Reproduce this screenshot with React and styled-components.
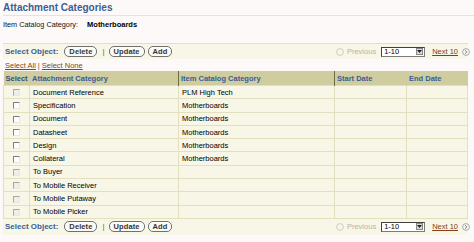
import React from "react";
import styled, { createGlobalStyle } from "styled-components";

const GlobalStyle = createGlobalStyle`
  html, body {
    margin: 0;
    padding: 0;
    background: #fcf9f8;
  }
  body {
    font-family: "Liberation Sans", Arial, sans-serif;
    font-size: 8px;
    color: #000;
  }
`;

const rows = [
  ["Document Reference", "PLM High Tech", true],
  ["Specification", "Motherboards"],
  ["Document", "Motherboards"],
  ["Datasheet", "Motherboards"],
  ["Design", "Motherboards"],
  ["Collateral", "Motherboards"],
  ["To Buyer", "", true],
  ["To Mobile Receiver", "", true],
  ["To Mobile Putaway", "", true],
  ["To Mobile Picker", "", true],
];

function Toolbar({ bottom }) {
  return (
    <Bar $bottom={bottom}>
      <Label>Select Object:</Label>
      <PillButton>Delete</PillButton>
      <Sep>|</Sep>
      <PillButton>Update</PillButton>
      <PillButton>Add</PillButton>
      <Pager>
        <Circle>
          <svg width="8" height="8" viewBox="0 0 8 8">
            <circle cx="4" cy="4" r="3.4" fill="none" stroke="#c8c8c0" strokeWidth="0.9" />
          </svg>
        </Circle>
        <Prev>Previous</Prev>
        <Select>
          <span>1-10</span>
          <Drop>
            <svg width="5" height="4" viewBox="0 0 5 4">
              <path d="M0 0 L5 0 L2.5 3 Z" fill="#222" />
            </svg>
          </Drop>
        </Select>
        <NextLink>Next 10</NextLink>
        <Circle>
          <svg width="8" height="8" viewBox="0 0 8 8">
            <circle cx="4" cy="4" r="3.4" fill="none" stroke="#9aa0b0" strokeWidth="0.9" />
            <path d="M3 2.3 L5 4 L3 5.7" fill="none" stroke="#7a8096" strokeWidth="0.9" />
          </svg>
        </Circle>
      </Pager>
    </Bar>
  );
}

export default function App() {
  return (
    <Root>
      <GlobalStyle />
      <Title>Attachment Categories</Title>
      <SubLine>
        <SubLabel>Item Catalog Category:</SubLabel>
        <SubValue>Motherboards</SubValue>
      </SubLine>
      <Toolbar />
      <SelectLinks>
        <A>Select All</A>
        <Pipe>|</Pipe>
        <A>Select None</A>
      </SelectLinks>
      <Table>
        <colgroup>
          <col style={{ width: 26 }} />
          <col style={{ width: 149 }} />
          <col style={{ width: 156 }} />
          <col style={{ width: 72 }} />
          <col />
        </colgroup>
        <thead>
          <tr>
            <Th $first>Select</Th>
            <Th $line>Attachment Category</Th>
            <Th $line>Item Catalog Category</Th>
            <Th>Start Date</Th>
            <Th>End Date</Th>
          </tr>
        </thead>
        <tbody>
          {rows.map(([name, cat, dim]) => (
            <tr key={name}>
              <Td $center>
                <Check $dim={dim} />
              </Td>
              <Td>{name}</Td>
              <Td>{cat}</Td>
              <Td />
              <Td />
            </tr>
          ))}
        </tbody>
      </Table>
      <Toolbar bottom />
    </Root>
  );
}

const Root = styled.div`
  width: 474px;
  height: 242px;
  padding: 1px 6px 0 3px;
  box-sizing: border-box;
  display: flex;
  flex-direction: column;
`;

const Title = styled.div`
  font-size: 10px;
  font-weight: bold;
  color: #3a5e94;
  height: 14px;
  line-height: 14px;
  border-bottom: 1px solid #ebe2cf;
  margin-right: -6px;
`;

const SubLine = styled.div`
  display: flex;
  gap: 9px;
  height: 12px;
  align-items: center;
  margin-top: 2px;
  color: #000;
`;

const SubLabel = styled.span`
  font-size: 7.3px;
  color: #111;
`;

const SubValue = styled.span`
  font-size: 7.5px;
  font-weight: bold;
  color: #000;
`;

const Bar = styled.div`
  display: flex;
  align-items: center;
  height: ${(p) => (p.$bottom ? "16px" : "15px")};
  background: #f8f6e6;
  border-top: ${(p) => (p.$bottom ? "none" : "1px solid #e4dfc2")};
  padding-left: 2px;
  margin-top: ${(p) => (p.$bottom ? "0" : "13px")};
`;

const Label = styled.span`
  color: #3a5e94;
  font-weight: bold;
  font-size: 8px;
  margin-right: 6px;
`;

const PillButton = styled.span`
  display: inline-flex;
  align-items: center;
  height: 9px;
  padding: 0 4px;
  border: 1px solid #707070;
  border-radius: 5px;
  background: #fbfbf8;
  color: #333;
  font-size: 7.5px;
  font-weight: bold;
  letter-spacing: 0.1px;
  margin-right: 3px;
`;

const Sep = styled.span`
  color: #666;
  margin: 0 4px 0 2px;
  font-size: 8px;
`;

const Pager = styled.div`
  margin-left: auto;
  display: flex;
  align-items: center;
  gap: 3px;
  margin-right: -2px;
`;

const Circle = styled.span`
  display: inline-flex;
`;

const Prev = styled.span`
  color: #b4b4ae;
  font-size: 7.5px;
`;

const Select = styled.span`
  display: inline-flex;
  align-items: center;
  justify-content: space-between;
  width: 44px;
  height: 10px;
  background: #fff;
  border: 1px solid #7c7c7c;
  border-top-color: #404040;
  border-left-color: #404040;
  font-size: 7.5px;
  padding-left: 2px;
  margin-left: 2px;
  box-sizing: border-box;
  margin-right: 4px;
`;

const Drop = styled.span`
  display: inline-flex;
  align-items: center;
  justify-content: center;
  width: 7px;
  height: 7px;
  background: #d8d8d8;
  border: 1px solid #888;
  margin-right: 1px;
  box-sizing: border-box;
`;

const NextLink = styled.span`
  color: #80401a;
  text-decoration: underline;
  font-size: 7.5px;
  margin-right: 1px;
`;

const SelectLinks = styled.div`
  display: flex;
  align-items: center;
  height: 12px;
  font-size: 7.5px;
  padding-left: 2px;
`;

const A = styled.span`
  color: #7a4a1e;
  text-decoration: underline;
`;

const Pipe = styled.span`
  color: #7a4a1e;
  margin: 0 2px;
`;

const Table = styled.table`
  border-collapse: collapse;
  width: 465px;
  table-layout: fixed;
  background: #f7f6e7;
`;

const Th = styled.th`
  background: #cfcc9f;
  color: ${(p) => (p.$first ? "#2f4f80" : "#3a5e94")};
  font-weight: bold;
  font-size: 7.5px;
  text-align: left;
  height: 14px;
  padding: 0 2px;
  white-space: nowrap;
  overflow: hidden;
  border-right: 1px solid ${(p) => (p.$line ? "#6e6c40" : "#cfcc9f")};
`;

const Td = styled.td`
  height: 12.3px;
  padding: 0 3px;
  font-size: 7.5px;
  border: 1px solid #e4dfbf;
  text-align: ${(p) => (p.$center ? "center" : "left")};
  white-space: nowrap;
`;

const Check = styled.span`
  display: inline-block;
  width: 7px;
  height: 7px;
  box-sizing: border-box;
  border: 1px solid ${(p) => (p.$dim ? "#a8a8a0" : "#808080")};
  border-right-color: #e8e8e0;
  border-bottom-color: #e8e8e0;
  background: ${(p) => (p.$dim ? "#eeeeea" : "#fff")};
  vertical-align: middle;
`;
